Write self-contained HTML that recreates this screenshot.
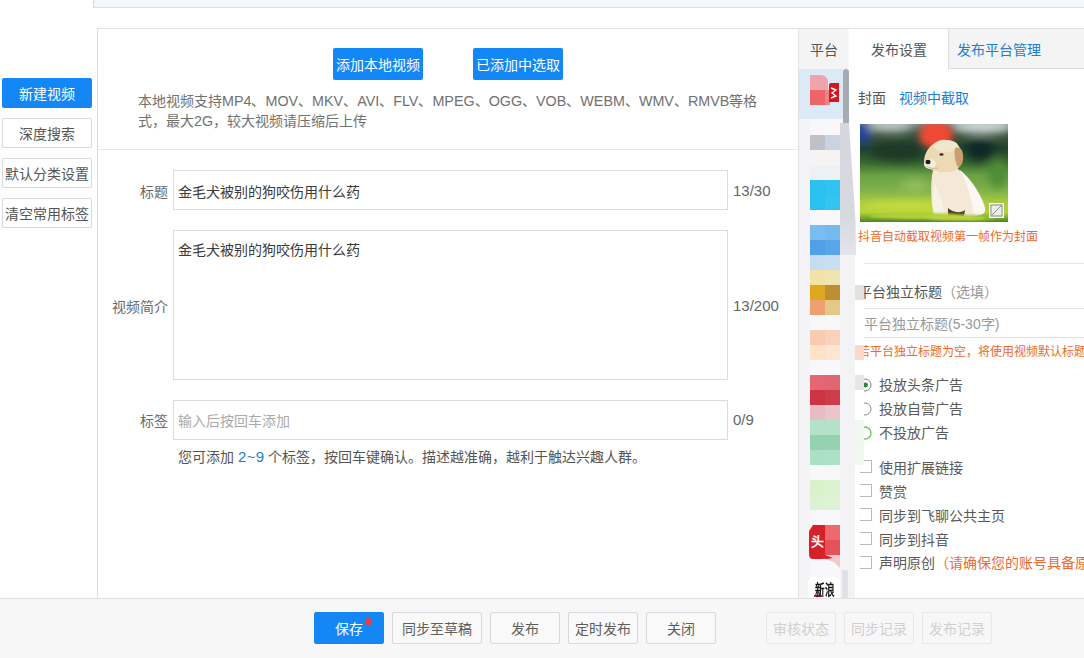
<!DOCTYPE html>
<html lang="zh-CN">
<head>
<meta charset="utf-8">
<style>
*{margin:0;padding:0;box-sizing:border-box}
html,body{width:1084px;height:658px;overflow:hidden;background:#fff}
body{position:relative;font-family:"Liberation Sans",sans-serif;font-size:14px;color:#5a5a5a}
.a{position:absolute}
.nw{white-space:nowrap}
.btn{position:absolute;height:30px;line-height:30px;text-align:center;border-radius:2px;font-size:14px;white-space:nowrap}
.bb{background:#1487f6;color:#fff;line-height:33px}
.bw{background:#fff;border:1px solid #d6d9de;color:#555;line-height:30px}
.lbl{position:absolute;text-align:right;width:80px;color:#6a6a6a}
.inp{position:absolute;border:1px solid #dcdcdc;background:#fff}
.fb{position:absolute;height:32px;line-height:33px;text-align:center;border:1px solid #d6d9de;background:#f9f9f9;border-radius:2px;color:#5e5e5e}
.fd{color:#d0d0d0;border-color:#e8e8e8;background:#f7f7f7}
.mo{position:absolute;width:15px;height:15px}
i{font-style:normal;font-size:14.33px}
</style>
</head>
<body>
<!-- top bar -->
<div class="a" style="left:93px;top:0;width:991px;height:8px;background:#f2f6fd;border-left:1px solid #d6d9e0;border-bottom:1px solid #dcdde2"></div>

<!-- left sidebar -->
<div class="btn bb" style="left:2px;top:78px;width:90px">新建视频</div>
<div class="btn bw" style="left:2px;top:118px;width:90px">深度搜索</div>
<div class="btn bw" style="left:2px;top:158px;width:90px">默认分类设置</div>
<div class="btn bw" style="left:2px;top:198px;width:90px">清空常用标签</div>

<!-- main panel -->
<div class="a" style="left:97px;top:28px;width:702px;height:570px;border-left:1px solid #dedede;border-top:1px solid #e2e2e2;border-right:1px solid #e2e2e2"></div>
<div class="btn bb" style="left:333px;top:48px;width:90px;height:32px;line-height:35px">添加本地视频</div>
<div class="btn bb" style="left:473px;top:48px;width:90px;height:32px;line-height:35px">已添加中选取</div>
<div class="a nw" style="left:138px;top:91px;line-height:20px;color:#717171">本地视频支持<i>MP4</i>、<i>MOV</i>、<i>MKV</i>、<i>AVI</i>、<i>FLV</i>、<i>MPEG</i>、<i>OGG</i>、<i>VOB</i>、<i>WEBM</i>、<i>WMV</i>、<i>RMVB</i>等格<br>式，最大<i>2G</i>，较大视频请压缩后上传</div>
<div class="a" style="left:98px;top:149px;width:700px;height:1px;background:#e8e8e8"></div>

<div class="lbl" style="left:88px;top:181px">标题</div>
<div class="inp" style="left:173px;top:170px;width:555px;height:40px"></div>
<div class="a nw" style="left:178px;top:181px;color:#3a3a3a">金毛犬被别的狗咬伤用什么药</div>
<div class="a nw" style="left:733px;top:182px;font-size:15px;color:#666">13/30</div>

<div class="lbl" style="left:88px;top:296px">视频简介</div>
<div class="inp" style="left:173px;top:230px;width:555px;height:150px"></div>
<div class="a nw" style="left:178px;top:239px;color:#3a3a3a">金毛犬被别的狗咬伤用什么药</div>
<div class="a nw" style="left:733px;top:297px;font-size:15px;color:#666">13/200</div>

<div class="lbl" style="left:88px;top:410px">标签</div>
<div class="inp" style="left:173px;top:400px;width:555px;height:40px"></div>
<div class="a nw" style="left:178px;top:410px;color:#aaa">输入后按回车添加</div>
<div class="a nw" style="left:733px;top:411px;font-size:15px;color:#666">0/9</div>
<div class="a nw" style="left:178px;top:446px;color:#555">您可添加 <span style="color:#1a7fd0;font-size:15px;letter-spacing:.4px">2~9</span> 个标签，按回车键确认。描述越准确，越利于触达兴趣人群。</div>

<!-- platform column -->
<div class="a" style="left:798px;top:28px;width:51px;height:570px;background:#f8f8fa;border-left:1px solid #e0e0e0;border-top:1px solid #e4e4e4"></div>
<div class="a" style="left:799px;top:29px;width:49px;height:40px;background:#f4f4f4;text-align:center;line-height:42px;color:#555">平台</div>
<div class="a" style="left:799px;top:69px;width:11px;height:529px;background:#f4f4f7"></div>
<div class="a" style="left:840px;top:255px;width:15px;height:343px;background:#f3f3f6"></div>
<div class="a" style="left:842px;top:570px;width:6px;height:28px;background:#dfe1e6"></div>
<div class="a" style="left:799px;top:69px;width:44px;height:50px;background:#dce9f6"></div>
<div class="a" style="left:843px;top:69px;width:6px;height:56px;background:#a6aab3;border-radius:3px 3px 0 0"></div>
<svg class="a" style="left:0;top:0" width="1084" height="658"><defs><linearGradient id="sm" x1="0" y1="0" x2="0" y2="1"><stop offset="0" stop-color="#d6d6de"/><stop offset="0.7" stop-color="#d8d8e0"/><stop offset="1" stop-color="#e4e4ea"/></linearGradient></defs><polygon points="840,123 849,123 855.5,222 856,255 840,255" fill="url(#sm)"/></svg>
<!-- tabs -->
<div class="a" style="left:849px;top:28px;width:235px;height:1px;background:#e4e4e4"></div>
<div class="a" style="left:849px;top:29px;width:99px;height:40px;background:#fff;text-align:center;line-height:42px;color:#555">发布设置</div>
<div class="a" style="left:948px;top:29px;width:136px;height:40px;background:#f4f4f4;border-left:1px solid #dedede;border-bottom:1px solid #dedede;line-height:43px;color:#1a7fd0;padding-left:8px">发布平台管理</div>

<!-- right settings -->
<div class="a nw" style="left:858px;top:87px;color:#555">封面</div>
<div class="a nw" style="left:899px;top:87px;color:#1a7fd0">视频中截取</div>
<div class="a" style="left:860px;top:124px;width:148px;height:98px;overflow:hidden"><svg width="148" height="98" viewBox="0 0 148 98" style="display:block">
<defs>
<filter id="b6" x="-50%" y="-50%" width="200%" height="200%"><feGaussianBlur stdDeviation="5"/></filter>
<filter id="b4" x="-50%" y="-50%" width="200%" height="200%"><feGaussianBlur stdDeviation="3.5"/></filter>
<filter id="b1" x="-50%" y="-50%" width="200%" height="200%"><feGaussianBlur stdDeviation="1.2"/></filter>
<filter id="b05" x="-50%" y="-50%" width="200%" height="200%"><feGaussianBlur stdDeviation="0.7"/></filter>
<linearGradient id="bg" x1="0" y1="0" x2="0" y2="1">
<stop offset="0" stop-color="#7e9088"/>
<stop offset="0.1" stop-color="#3c5640"/>
<stop offset="0.25" stop-color="#22402a"/>
<stop offset="0.4" stop-color="#3a6a30"/>
<stop offset="0.52" stop-color="#6aa044"/>
<stop offset="0.68" stop-color="#82b24a"/>
<stop offset="0.8" stop-color="#a8cc40"/>
<stop offset="0.9" stop-color="#b4d43a"/>
<stop offset="1" stop-color="#4a8424"/>
</linearGradient>
</defs>
<rect width="148" height="98" fill="url(#bg)"/>
<g filter="url(#b6)">
<ellipse cx="3" cy="8" rx="7" ry="12" fill="#1a3cb0"/>
<ellipse cx="30" cy="1" rx="22" ry="6" fill="#c4ccc8"/>
<ellipse cx="122" cy="2" rx="30" ry="7" fill="#d0d8d8"/>
<ellipse cx="120" cy="26" rx="14" ry="11" fill="#0e2628"/>
<ellipse cx="40" cy="28" rx="30" ry="9" fill="#1e3826"/>
<ellipse cx="70" cy="30" rx="10" ry="8" fill="#244a3a"/>
<ellipse cx="138" cy="50" rx="10" ry="14" fill="#4e8e34"/>
<ellipse cx="55" cy="62" rx="14" ry="6" fill="#96c062"/>
</g>
<ellipse cx="76" cy="11" rx="17" ry="14" fill="#f04a34" filter="url(#b4)"/>
<g filter="url(#b4)">
<ellipse cx="50" cy="82" rx="48" ry="5" fill="#c4dc3c"/>
<ellipse cx="135" cy="86" rx="14" ry="4" fill="#a8cc36"/>
</g>
<g filter="url(#b05)">
<path d="M73 46 C70 60 71 80 74 92 L104 93 C112 93 122 92 125 88 C126 80 118 66 110 56 C104 50 100 46 96 44Z" fill="#f3e9d6"/>
<path d="M100 46 C110 54 120 70 125 84 C126 90 120 92 114 92 C112 78 108 60 100 46Z" fill="#fbf7f4"/>
<path d="M75 60 C80 70 84 82 84 93 L75 93 C72 82 72 70 75 60Z" fill="#f8f2e6"/>
<path d="M88 84 C92 88 100 90 105 86 L104 92 L88 92Z" fill="#4a3e1c"/>
<path d="M64 38 C64 30 68 22 78 17 C86 14 96 17 100 24 C104 32 102 42 96 46 C88 50 76 48 70 45 C66 43 64 41 64 38Z" fill="#ecdab4"/>
<ellipse cx="86" cy="22" rx="12" ry="6" fill="#f2e6cc"/>
<path d="M95 24 C100 22 104 26 103 36 C102 42 99 44 97 42 C95 36 94 30 95 24Z" fill="#c8a070"/>
<ellipse cx="70" cy="40" rx="6" ry="5" fill="#f4ecdc"/>
</g>
<ellipse cx="68" cy="38" rx="2.6" ry="2.2" fill="#1c1c1c"/>
<ellipse cx="81.5" cy="30.5" rx="2" ry="1.2" fill="#3a2c24"/>
<path d="M66 42 Q72 46 78 44" stroke="#c8b090" stroke-width="0.8" fill="none"/>
<g filter="url(#b1)">
<ellipse cx="60" cy="92" rx="50" ry="3" fill="#b0d038"/>
<ellipse cx="115" cy="94" rx="20" ry="3" fill="#8cbc30"/>
<ellipse cx="95" cy="94" rx="30" ry="2.5" fill="#b8d440"/>
</g>
<rect x="129.5" y="79.5" width="14" height="14" fill="#f2f2f6" fill-opacity="0.9" stroke="#fffff4" stroke-width="1"/>
<rect x="131" y="81" width="11" height="11" fill="none" stroke="#8c8c94" stroke-width="1"/>
<line x1="132" y1="91" x2="141" y2="82" stroke="#8c8c94" stroke-width="1"/>
</svg></div>
<div class="a nw" style="left:858px;top:227px;font-size:12px;color:#ee6a2c">抖音自动截取视频第一帧作为封面</div>
<div class="a" style="left:858px;top:263px;width:226px;height:1px;background:#e6e6e6"></div>
<div class="a nw" style="left:858px;top:281px;color:#555">平台独立标题<span style="color:#999">（选填）</span></div>
<div class="a" style="left:858px;top:308px;width:226px;height:30px;border-top:1px solid #e0e0e0;border-bottom:1px solid #e0e0e0"></div>
<div class="a nw" style="left:864px;top:313px;color:#999">平台独立标题(5-30字)</div>
<div class="a nw" style="left:858px;top:342px;font-size:12px;color:#ee6a2c">若平台独立标题为空，将使用视频默认标题</div>

<div class="a nw" style="left:879px;top:374px">投放头条广告</div>
<div class="a nw" style="left:879px;top:398px">投放自营广告</div>
<div class="a nw" style="left:879px;top:422px">不投放广告</div>
<div class="a nw" style="left:879px;top:457px">使用扩展链接</div>
<div class="a nw" style="left:879px;top:481px">赞赏</div>
<div class="a nw" style="left:879px;top:505px">同步到飞聊公共主页</div>
<div class="a nw" style="left:879px;top:529px">同步到抖音</div>
<div class="a nw" style="left:879px;top:552px">声明原创<span style="color:#ee6a2c">（请确保您的账号具备原创</span></div>

<svg class="a" style="left:850px;top:370px" width="30" height="200">
<circle cx="15" cy="15" r="6" fill="#fff" stroke="#808080" stroke-width="1"/>
<circle cx="15.5" cy="15" r="2.4" fill="#1e8c3c"/>
<circle cx="15" cy="39" r="6" fill="#fff" stroke="#8c8c8c" stroke-width="1"/>
<circle cx="15" cy="63" r="6" fill="#fff" stroke="#72c466" stroke-width="1.4"/>
<rect x="9.5" y="90.5" width="12" height="12" fill="#fff" stroke="#bbb"/>
<rect x="9.5" y="114.5" width="12" height="12" fill="#fff" stroke="#bbb"/>
<rect x="9.5" y="138.5" width="12" height="12" fill="#fff" stroke="#bbb"/>
<rect x="9.5" y="162.5" width="12" height="12" fill="#fff" stroke="#bbb"/>
<rect x="9.5" y="186.5" width="12" height="12" fill="#fff" stroke="#bbb"/>
</svg>
<!-- overlay -->
<div class="a" style="left:855px;top:255px;width:9px;height:200px;background:#fff"></div><div class="a" style="left:855px;top:455px;width:5px;height:143px;background:rgba(255,255,255,.93)"></div>
<div class="a" style="left:810px;top:75px;width:18px;height:15px;background:#eea4aa;border-top-right-radius:7px"></div>
<div class="a" style="left:810px;top:90px;width:15px;height:15px;background:#ee6468"></div><div class="a" style="left:825px;top:90px;width:5px;height:15px;background:#f08484"></div>
<div class="mo" style="left:810px;top:135px;background:#c0c0c8"></div><div class="mo" style="left:825px;top:135px;background:#cbd2e2"></div>
<div class="mo" style="left:810px;top:150px;background:#f5f4f2"></div><div class="mo" style="left:825px;top:150px;background:#f5f4f2"></div>
<div class="mo" style="left:810px;top:165px;background:#eef1f3"></div><div class="mo" style="left:825px;top:165px;background:#eef1f3"></div>
<div class="mo" style="left:810px;top:180px;background:#2ac0f0"></div><div class="mo" style="left:825px;top:180px;background:#30c2f0"></div>
<div class="mo" style="left:810px;top:195px;background:#2cc0f0"></div><div class="mo" style="left:825px;top:195px;background:#34c4f0"></div>
<div class="mo" style="left:810px;top:225px;background:#78bcf0"></div><div class="mo" style="left:825px;top:225px;background:#74baee"></div>
<div class="mo" style="left:810px;top:240px;background:#50a0e8"></div><div class="mo" style="left:825px;top:240px;background:#58a6ea"></div>
<div class="mo" style="left:810px;top:255px;background:#c6dcf2"></div><div class="mo" style="left:825px;top:255px;background:#c8def2"></div>
<div class="mo" style="left:810px;top:270px;background:#f2e2a8"></div><div class="mo" style="left:825px;top:270px;background:#f0e4b0"></div>
<div class="mo" style="left:810px;top:285px;background:#dca820"></div><div class="mo" style="left:825px;top:285px;background:#bc9030"></div>
<div class="mo" style="left:810px;top:300px;background:#eea070"></div><div class="mo" style="left:825px;top:300px;background:#e4c888"></div>
<div class="mo" style="left:810px;top:330px;background:#f9cbb0"></div><div class="mo" style="left:825px;top:330px;background:#f8d2ba"></div>
<div class="mo" style="left:810px;top:345px;background:#fde2c8"></div><div class="mo" style="left:825px;top:345px;background:#fce6d2"></div>
<div class="mo" style="left:810px;top:375px;background:#e46674"></div><div class="mo" style="left:825px;top:375px;background:#e06672"></div>
<div class="mo" style="left:810px;top:390px;background:#cc3444"></div><div class="mo" style="left:825px;top:390px;background:#cc3c4a"></div>
<div class="mo" style="left:810px;top:405px;background:#e8bcc4"></div><div class="mo" style="left:825px;top:405px;background:#eac6cc"></div>
<div class="mo" style="left:810px;top:420px;background:#b4e2c8"></div><div class="mo" style="left:825px;top:420px;background:#b4e2c8"></div>
<div class="mo" style="left:810px;top:435px;background:#94d2b0"></div><div class="mo" style="left:825px;top:435px;background:#96d2b2"></div>
<div class="mo" style="left:810px;top:450px;background:#ace0c4"></div><div class="mo" style="left:825px;top:450px;background:#aee0c6"></div>
<div class="mo" style="left:810px;top:480px;background:#daf2cc"></div><div class="mo" style="left:825px;top:480px;background:#dcf2d0"></div>
<div class="mo" style="left:810px;top:495px;background:#dcf2d0"></div><div class="mo" style="left:825px;top:495px;background:#def2d4"></div>
<div class="a" style="left:855px;top:285px;width:9px;height:15px;background:#e2e2e2"></div>
<div class="a" style="left:855px;top:345px;width:9px;height:15px;background:#fbd8c8"></div>
<div class="a" style="left:855px;top:375px;width:9px;height:15px;background:#e4e8e4"></div>
<div class="a" style="left:855px;top:420px;width:9px;height:15px;background:#f0f8f0"></div>
<div class="a" style="left:855px;top:435px;width:9px;height:15px;background:#eef8ee"></div>
<div class="a" style="left:855px;top:450px;width:9px;height:15px;background:#f0f8f0"></div>
<svg class="a" style="left:828px;top:82px" width="12" height="22"><path d="M1 3 Q1 1 3 1 L11 1 L11 20 L1 20 Z" fill="#d8141e"/><polyline points="3,6 8,8 4,11 8,14 3,16" fill="none" stroke="#fff" stroke-width="1.4"/></svg>
<div class="a" style="left:825px;top:525px;width:15px;height:15px;background:#ec6a6e"></div>
<div class="a" style="left:825px;top:540px;width:15px;height:15px;background:#e65058"></div>
<svg class="a" style="left:800px;top:520px" width="45" height="60"><polygon points="25,35 40,35 40,48 34,42 25,39" fill="#f2c8cc"/><path d="M13 5 L25 5 L25 38 L32 38 L22 39 L13 39 Q9 39 9 34 L9 11 Z" fill="#d9202a"/><path d="M25 35 L33 38 L25 39 Z" fill="#d9202a"/></svg>
<div class="a nw" style="left:811px;top:534px;font-size:13px;line-height:16px;color:#fff;font-weight:bold">头</div>
<div class="a" style="left:808px;top:577px;width:32px;height:21px;background:#fff;border-radius:6px 6px 0 0"></div><div class="a" style="left:814px;top:595px;width:8px;height:2px;background:#d02030"></div>
<div class="a nw" style="left:815px;top:582px;font-size:15px;line-height:16px;color:#111;font-weight:bold;transform:scaleX(0.64);transform-origin:0 0;width:40px">新浪</div>

<!-- footer -->
<div class="a" style="left:0;top:598px;width:1084px;height:60px;background:#f7f7f7;border-top:1px solid #e0e0e0"></div>
<div class="fb" style="left:314px;top:612px;width:70px;background:#1487f6;border-color:#1487f6;color:#fff">保存</div>
<div class="a" style="left:365px;top:618px;width:7px;height:7px;border-radius:50%;background:#f03c3c"></div>
<div class="fb" style="left:392px;top:612px;width:90px">同步至草稿</div>
<div class="fb" style="left:490px;top:612px;width:70px">发布</div>
<div class="fb" style="left:568px;top:612px;width:70px">定时发布</div>
<div class="fb" style="left:646px;top:612px;width:70px">关闭</div>
<div class="fb fd" style="left:766px;top:612px;width:70px">审核状态</div>
<div class="fb fd" style="left:844px;top:612px;width:70px">同步记录</div>
<div class="fb fd" style="left:922px;top:612px;width:70px">发布记录</div>
</body>
</html>
